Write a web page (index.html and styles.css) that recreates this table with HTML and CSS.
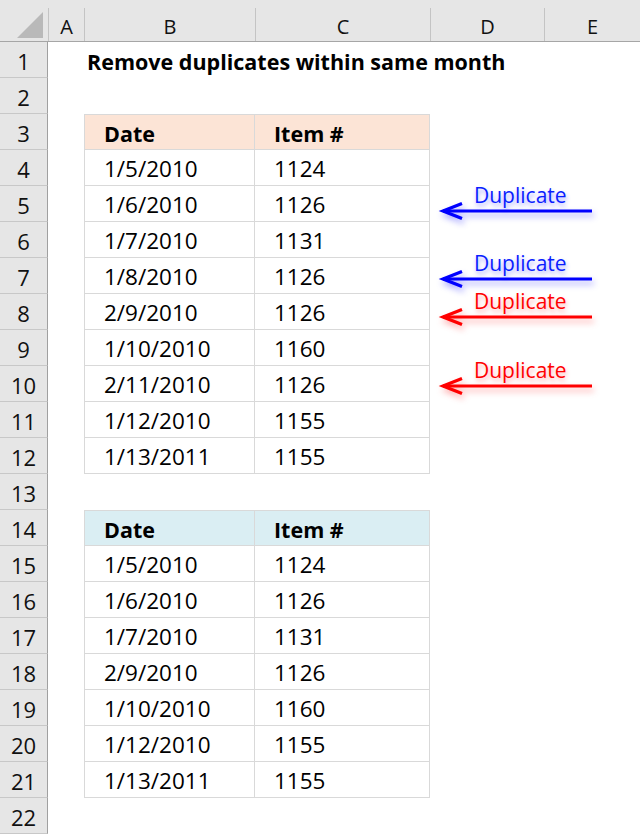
FILE: index.html
```html
<!DOCTYPE html>
<html>
<head>
<meta charset="utf-8">
<link rel="stylesheet" href="styles.css">
</head>
<body>
<div class="sheet">
  <div class="corner"><svg class="tri" width="48" height="42" viewBox="0 0 48 42"><polygon points="43,12 43,38 17,38" fill="#b9b9b9"/></svg></div>
  <div class="colhead"><span class="lbl">A</span></div>
  <div class="colhead"><span class="lbl">B</span></div>
  <div class="colhead"><span class="lbl">C</span></div>
  <div class="colhead"><span class="lbl">D</span></div>
  <div class="colhead"><span class="lbl">E</span></div>

  <div class="rh">1</div><div class="c"></div><div class="c title">Remove duplicates within same month</div><div class="c"></div><div class="c"></div><div class="c"></div>
  <div class="rh">2</div><div class="c"></div><div class="c"></div><div class="c"></div><div class="c"></div><div class="c"></div>

  <div class="rh">3</div><div class="c"></div><div class="c tb th peach first">Date</div><div class="c tc th peach first">Item #</div><div class="c"></div><div class="c"></div>
  <div class="rh">4</div><div class="c"></div><div class="c tb">1/5/2010</div><div class="c tc">1124</div><div class="c"></div><div class="c"></div>
  <div class="rh">5</div><div class="c"></div><div class="c tb">1/6/2010</div><div class="c tc">1126</div><div class="c"></div><div class="c"></div>
  <div class="rh">6</div><div class="c"></div><div class="c tb">1/7/2010</div><div class="c tc">1131</div><div class="c"></div><div class="c"></div>
  <div class="rh">7</div><div class="c"></div><div class="c tb">1/8/2010</div><div class="c tc">1126</div><div class="c"></div><div class="c"></div>
  <div class="rh">8</div><div class="c"></div><div class="c tb">2/9/2010</div><div class="c tc">1126</div><div class="c"></div><div class="c"></div>
  <div class="rh">9</div><div class="c"></div><div class="c tb">1/10/2010</div><div class="c tc">1160</div><div class="c"></div><div class="c"></div>
  <div class="rh">10</div><div class="c"></div><div class="c tb">2/11/2010</div><div class="c tc">1126</div><div class="c"></div><div class="c"></div>
  <div class="rh">11</div><div class="c"></div><div class="c tb">1/12/2010</div><div class="c tc">1155</div><div class="c"></div><div class="c"></div>
  <div class="rh">12</div><div class="c"></div><div class="c tb">1/13/2011</div><div class="c tc">1155</div><div class="c"></div><div class="c"></div>
  <div class="rh">13</div><div class="c"></div><div class="c"></div><div class="c"></div><div class="c"></div><div class="c"></div>

  <div class="rh">14</div><div class="c"></div><div class="c tb th blue first">Date</div><div class="c tc th blue first">Item #</div><div class="c"></div><div class="c"></div>
  <div class="rh">15</div><div class="c"></div><div class="c tb">1/5/2010</div><div class="c tc">1124</div><div class="c"></div><div class="c"></div>
  <div class="rh">16</div><div class="c"></div><div class="c tb">1/6/2010</div><div class="c tc">1126</div><div class="c"></div><div class="c"></div>
  <div class="rh">17</div><div class="c"></div><div class="c tb">1/7/2010</div><div class="c tc">1131</div><div class="c"></div><div class="c"></div>
  <div class="rh">18</div><div class="c"></div><div class="c tb">2/9/2010</div><div class="c tc">1126</div><div class="c"></div><div class="c"></div>
  <div class="rh">19</div><div class="c"></div><div class="c tb">1/10/2010</div><div class="c tc">1160</div><div class="c"></div><div class="c"></div>
  <div class="rh">20</div><div class="c"></div><div class="c tb">1/12/2010</div><div class="c tc">1155</div><div class="c"></div><div class="c"></div>
  <div class="rh">21</div><div class="c"></div><div class="c tb">1/13/2011</div><div class="c tc">1155</div><div class="c"></div><div class="c"></div>
  <div class="rh">22</div><div class="c"></div><div class="c"></div><div class="c"></div><div class="c"></div><div class="c"></div>

  <div class="arrow a-blue a1">
    <span class="dup">Duplicate</span>
    <svg class="arr" width="165" height="40" viewBox="0 0 165 40"><polyline points="7,27 156,27" /><polyline points="26,19.5 7,27 26,34.5" /></svg>
  </div>
  <div class="arrow a-blue a2">
    <span class="dup">Duplicate</span>
    <svg class="arr" width="165" height="40" viewBox="0 0 165 40"><polyline points="7,27 156,27" /><polyline points="26,19.5 7,27 26,34.5" /></svg>
  </div>
  <div class="arrow a-red a3">
    <span class="dup">Duplicate</span>
    <svg class="arr" width="165" height="40" viewBox="0 0 165 40"><polyline points="7,27 156,27" /><polyline points="26,19.5 7,27 26,34.5" /></svg>
  </div>
  <div class="arrow a-red a4">
    <span class="dup">Duplicate</span>
    <svg class="arr" width="165" height="40" viewBox="0 0 165 40"><polyline points="7,27 156,27" /><polyline points="26,19.5 7,27 26,34.5" /></svg>
  </div>
</div>
</body>
</html>
```

FILE: styles.css
```css
html, body {
  margin: 0;
  padding: 0;
  background: #ffffff;
}
body {
  width: 640px;
  height: 834px;
  overflow: hidden;
  font-family: "Open Sans", "Liberation Sans", sans-serif;
  color: #000;
}
.sheet {
  position: relative;
  display: grid;
  grid-template-columns: 48px 36px 171px 175px 114px 96px;
  grid-template-rows: 42px repeat(22, 36px);
  width: 640px;
}
.corner {
  background: #e6e6e6;
  border-bottom: 1px solid #a6a6a6;
  box-sizing: border-box;
  position: relative;
}
.tri {
  display: block;
}
.colhead {
  background: #e6e6e6;
  border-bottom: 1px solid #a6a6a6;
  box-sizing: border-box;
  padding-top: 8px;
  display: flex;
}
.colhead .lbl {
  flex: 1;
  display: flex;
  align-items: center;
  justify-content: center;
  border-left: 1px solid #c4c4c4;
  font-size: 20px;
  padding-top: 3px;
  color: #111;
}
.rh {
  background: #e6e6e6;
  border-right: 1px solid #a0a0a0;
  border-bottom: 1px solid #c8c8c8;
  box-sizing: border-box;
  display: flex;
  align-items: center;
  justify-content: center;
  font-size: 22px;
  padding-top: 2px;
  color: #111;
}
.c {
  box-sizing: border-box;
  display: flex;
  align-items: center;
  font-size: 22.5px;
  padding-top: 2px;
  white-space: nowrap;
  background: #fff;
}
.title {
  font-weight: bold;
  padding-left: 3px;
  overflow: visible;
  position: relative;
  z-index: 1;
  font-size: 21.5px;
}
.tb, .tc {
  padding-left: 19px;
  border-right: 1px solid #d9d9d9;
  border-bottom: 1px solid #d9d9d9;
}
.tb {
  border-left: 1px solid #d9d9d9;
}
.first {
  border-top: 1px solid #d9d9d9;
}
.th {
  font-weight: bold;
  font-size: 21.5px;
}
.peach {
  background: #fce4d6;
}
.blue {
  background: #daeef3;
}
.arrow {
  position: absolute;
  left: 436px;
  width: 165px;
  height: 40px;
}
.a1 { top: 183.5px; }
.a2 { top: 252px; }
.a3 { top: 290px; }
.a4 { top: 358.5px; }
.dup {
  position: absolute;
  left: 38px;
  top: 1px;
  font-size: 21px;
  line-height: 21px;
  white-space: nowrap;
}
.arr {
  position: absolute;
  left: 0;
  top: 0;
  overflow: visible;
}
.arr polyline {
  fill: none;
  stroke-width: 3.2;
  stroke-linecap: butt;
  stroke-linejoin: miter;
}
.a-blue .dup {
  color: #0a1eff;
  text-shadow: 1px 3px 4px rgba(60, 60, 255, 0.45);
}
.a-blue .arr {
  filter: drop-shadow(2px 4px 3px rgba(60, 60, 255, 0.45));
}
.a-blue .arr polyline {
  stroke: #0000ff;
}
.a-red .dup {
  color: #ff0000;
  text-shadow: 1px 3px 4px rgba(255, 60, 60, 0.4);
}
.a-red .arr {
  filter: drop-shadow(2px 4px 3px rgba(255, 60, 60, 0.4));
}
.a-red .arr polyline {
  stroke: #ff0000;
}
```
